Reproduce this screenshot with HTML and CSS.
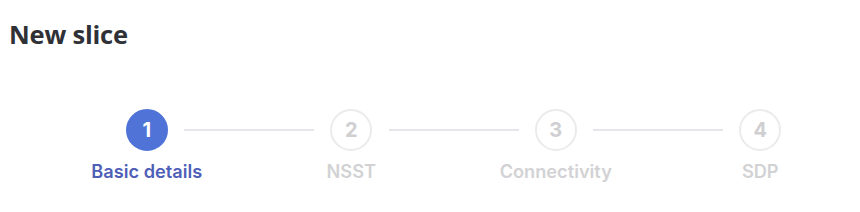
FILE: index.html
```html
<!DOCTYPE html>
<html>
<head>
<meta charset="utf-8">
<link rel="stylesheet" href="styles.css">
</head>
<body>
<div class="page">
  <h1 class="title">New slice</h1>
  <div class="stepper">
    <div class="step active">
      <div class="track"><span class="circle">1</span></div>
      <div class="label">Basic details</div>
    </div>
    <div class="step">
      <div class="track"><span class="line"></span><span class="circle">2</span></div>
      <div class="label">NSST</div>
    </div>
    <div class="step">
      <div class="track"><span class="line"></span><span class="circle">3</span></div>
      <div class="label">Connectivity</div>
    </div>
    <div class="step">
      <div class="track"><span class="line"></span><span class="circle">4</span></div>
      <div class="label">SDP</div>
    </div>
  </div>
</div>
</body>
</html>
```
FILE: styles.css
```css
html, body { margin: 0; padding: 0; background: #fff; }
body { width: 860px; height: 212px; overflow: hidden; }
.page { padding: 18px 0 0 9px; }
.title {
  margin: 0;
  font-family: "Open Sans", "Noto Sans", sans-serif;
  font-weight: 700;
  font-size: 25.5px;
  line-height: 32px;
  color: #2f3136;
  letter-spacing: -0.2px;
}
.stepper {
  display: grid;
  grid-template-columns: repeat(4, 204.5px);
  margin: 59px 0 0 35.5px;
}
.step { display: flex; flex-direction: column; align-items: center; }
.track { position: relative; width: 100%; height: 42px; display: flex; justify-content: center; }
.line {
  position: absolute;
  top: 20px;
  right: calc(50% + 37px);
  width: 130px;
  height: 2px;
  background: #e5e6ea;
}
.circle {
  box-sizing: border-box;
  width: 42px; height: 42px;
  border-radius: 50%;
  border: 2px solid #ebebeb;
  color: #cfcfd2;
  display: flex; align-items: center; justify-content: center;
  font-family: "Inter", sans-serif;
  font-weight: 700;
  font-size: 20px;
}
.active .circle { background: #5073d8; border-color: #5073d8; color: #fff; }
.label {
  margin-top: 9px;
  font-family: "Inter", sans-serif;
  font-weight: 600;
  font-size: 18.2px;
  line-height: 22px;
  color: #d2d2d4;
}
.active .label { color: #4f5fb8; }
```
